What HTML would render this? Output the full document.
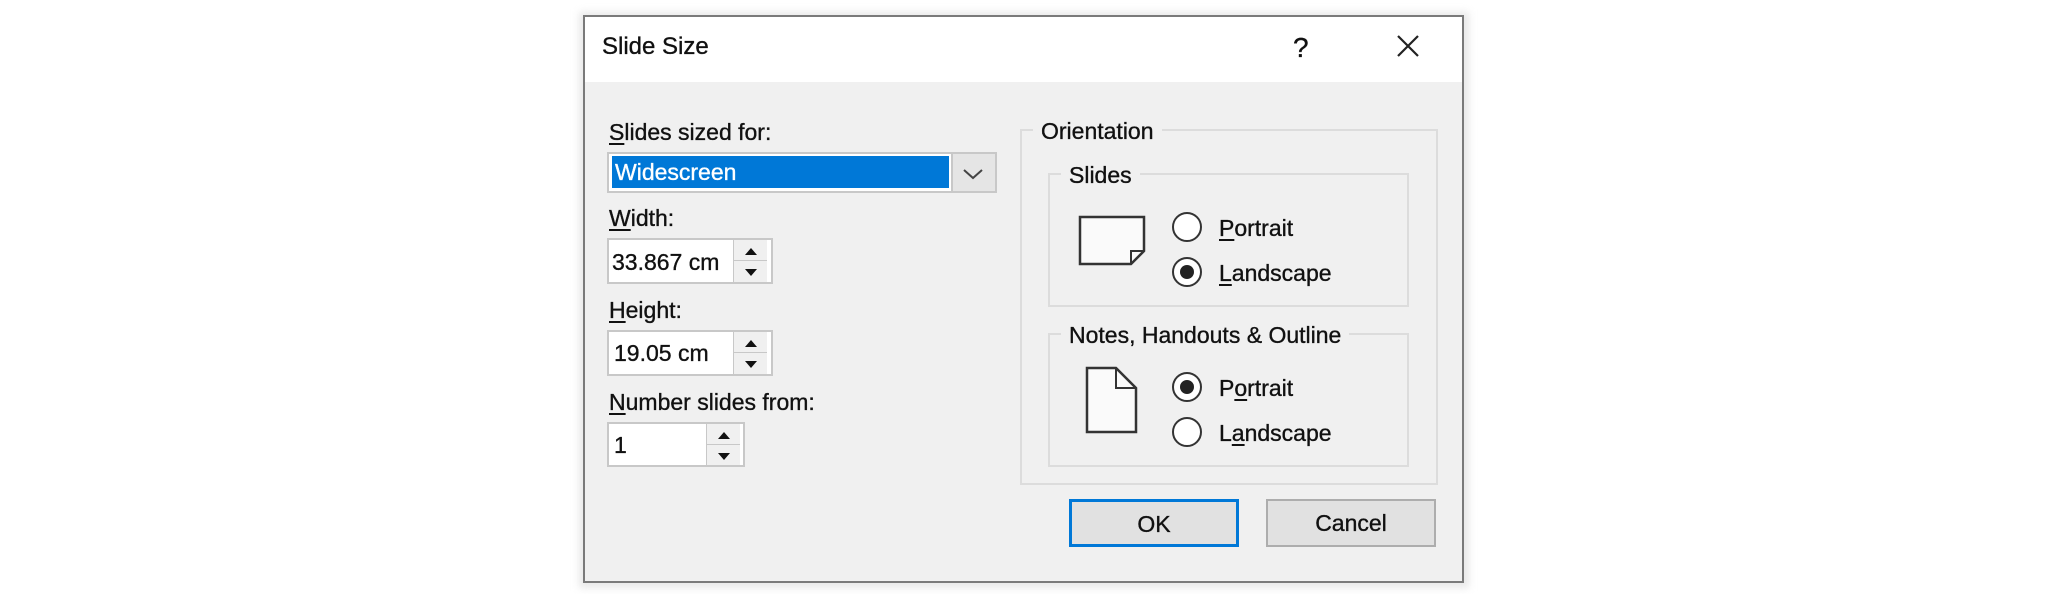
<!DOCTYPE html>
<html><head><style>
*{margin:0;padding:0;box-sizing:border-box}
body{width:2048px;height:594px;background:#fff;position:relative;overflow:hidden;font-family:"Segoe UI","Liberation Sans",sans-serif;color:#111;-webkit-text-stroke:0.35px #111}
.a{position:absolute}
.t{position:absolute;font-size:23px;line-height:28px;white-space:nowrap}
u{text-decoration:underline;text-underline-offset:3px}
.box{position:absolute;background:#fff;border:2px solid #c8c8c8}
.spin{position:absolute;background:#f0f0f0;border-left:1px solid #c8c8c8}
.fs{position:absolute;border:2px solid #dcdcdc}
.lg{position:absolute;background:#f0f0f0;padding:0 8px;font-size:23px;line-height:28px;white-space:nowrap}
.rad{position:absolute;width:30px;height:30px;border-radius:50%;border:2px solid #333;background:#fff}
.rad.on::after{content:"";position:absolute;left:6px;top:6px;width:14px;height:14px;border-radius:50%;background:#222}
.btn{position:absolute;background:#e1e1e1;border:2px solid #adadad;font-size:23px;text-align:center;line-height:44px}
</style></head><body>
<div class="a" style="left:579px;top:12px;width:890px;height:576px;background:#e8e8e8;filter:blur(4px)"></div>
<div class="a" style="left:583px;top:15px;width:881px;height:568px;background:#f0f0f0;border:2px solid #7a7a7a"></div>
<div class="a" style="left:585px;top:17px;width:877px;height:65px;background:#fff"></div>
<div class="t" style="left:602px;top:33px;font-size:24px">Slide Size</div>
<div class="t" style="left:1293px;top:34px;font-size:28px;font-weight:300">?</div>
<svg class="a" style="left:1396px;top:34px" width="24" height="24"><path d="M2 2L22 22M22 2L2 22" stroke="#222" stroke-width="2.2"/></svg>

<div class="t" style="left:609px;top:118px"><u>S</u>lides sized for:</div>
<div class="box" style="left:607px;top:152px;width:390px;height:41px;background:#fff"></div>
<div class="a" style="left:612px;top:156px;width:337px;height:32px;background:#0078d7"></div>
<div class="t" style="left:615px;top:158px;color:#fff;-webkit-text-stroke:0.35px #fff">Widescreen</div>
<div class="a" style="left:951px;top:154px;width:44px;height:37px;background:#e5e5e5;border-left:2px solid #c8c8c8"></div>
<svg class="a" style="left:962px;top:168px" width="22" height="12"><path d="M2 2L11 10L20 2" stroke="#444" stroke-width="2" fill="none"/></svg>

<div class="t" style="left:609px;top:204px"><u>W</u>idth:</div>
<div class="box" style="left:607px;top:238px;width:166px;height:46px"></div>
<div class="t" style="left:612px;top:248px">33.867 cm</div>
<div class="spin" style="left:733px;top:240px;width:34px;height:42px"><div style="position:absolute;left:0;right:0;top:20px;border-top:1px solid #c8c8c8"></div>
<svg style="position:absolute;left:9px;top:6px" width="16" height="32"><path d="M8 2L14 9H2Z M8 30L14 23H2Z" fill="#111"/></svg></div>

<div class="t" style="left:609px;top:296px"><u>H</u>eight:</div>
<div class="box" style="left:607px;top:330px;width:166px;height:46px"></div>
<div class="t" style="left:614px;top:339px">19.05 cm</div>
<div class="spin" style="left:733px;top:332px;width:34px;height:42px"><div style="position:absolute;left:0;right:0;top:20px;border-top:1px solid #c8c8c8"></div>
<svg style="position:absolute;left:9px;top:6px" width="16" height="32"><path d="M8 2L14 9H2Z M8 30L14 23H2Z" fill="#111"/></svg></div>

<div class="t" style="left:609px;top:388px"><u>N</u>umber slides from:</div>
<div class="box" style="left:607px;top:422px;width:138px;height:45px"></div>
<div class="t" style="left:614px;top:431px">1</div>
<div class="spin" style="left:706px;top:424px;width:34px;height:41px"><div style="position:absolute;left:0;right:0;top:20px;border-top:1px solid #c8c8c8"></div>
<svg style="position:absolute;left:9px;top:6px" width="16" height="32"><path d="M8 2L14 9H2Z M8 30L14 23H2Z" fill="#111"/></svg></div>

<div class="fs" style="left:1020px;top:129px;width:418px;height:356px"></div>
<div class="lg" style="left:1033px;top:117px">Orientation</div>
<div class="fs" style="left:1048px;top:173px;width:361px;height:134px"></div>
<div class="lg" style="left:1061px;top:161px">Slides</div>
<svg class="a" style="left:1078px;top:215px" width="70" height="52"><path d="M2 2H66V36L53 49H2Z" fill="#fafafa" stroke="#333" stroke-width="2.5"/><path d="M66 36H53V49" fill="none" stroke="#333" stroke-width="2"/></svg>
<div class="rad" style="left:1172px;top:212px"></div>
<div class="t" style="left:1219px;top:214px"><u>P</u>ortrait</div>
<div class="rad on" style="left:1172px;top:257px"></div>
<div class="t" style="left:1219px;top:259px"><u>L</u>andscape</div>

<div class="fs" style="left:1048px;top:333px;width:361px;height:134px"></div>
<div class="lg" style="left:1061px;top:321px">Notes, Handouts &amp; Outline</div>
<svg class="a" style="left:1085px;top:366px" width="54" height="70"><path d="M2 2H31L51 22V66H2Z" fill="#fafafa" stroke="#333" stroke-width="2.5"/><path d="M31 2V22H51" fill="none" stroke="#333" stroke-width="2"/></svg>
<div class="rad on" style="left:1172px;top:372px"></div>
<div class="t" style="left:1219px;top:374px">P<u>o</u>rtrait</div>
<div class="rad" style="left:1172px;top:417px"></div>
<div class="t" style="left:1219px;top:419px">L<u>a</u>ndscape</div>

<div class="btn" style="left:1069px;top:499px;width:170px;height:48px;border:3px solid #0078d7">OK</div>
<div class="btn" style="left:1266px;top:499px;width:170px;height:48px">Cancel</div>
</body></html>
